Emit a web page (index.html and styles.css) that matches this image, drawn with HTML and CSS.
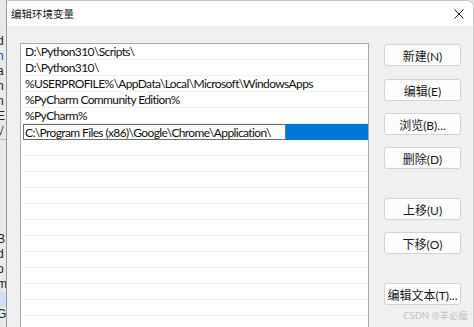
FILE: index.html
```html
<!DOCTYPE html>
<html lang="zh-CN">
<head>
<meta charset="utf-8">
<title>编辑环境变量</title>
<link rel="stylesheet" href="styles.css">
</head>
<body>
<div class="behind">
  <div class="frag top">ł</div>
  <div class="frag">d</div>
  <div class="frag blue">n</div>
  <div class="frag">a</div>
  <div class="frag">n</div>
  <div class="frag">n</div>
  <div class="frag">E</div>
  <div class="frag">√</div>
  <div class="gap"></div>
  <div class="frag">B</div>
  <div class="frag">d</div>
  <div class="frag">o</div>
  <div class="frag">m</div>
  <div class="frag blue sel">l</div>
  <div class="frag">G</div>
</div>
<div class="dialog">
  <div class="titlebar">
    <span class="title">编辑环境变量</span>
    <svg class="close" width="10" height="10" viewBox="0 0 10 10"><path d="M0.5 0.5 L9.5 9.5 M9.5 0.5 L0.5 9.5" stroke="#1a1a1a" stroke-width="1" fill="none"/></svg>
  </div>
  <div class="content">
    <div class="list">
      <div class="row">D:\Python310\Scripts\</div>
      <div class="row">D:\Python310\</div>
      <div class="row">%USERPROFILE%\AppData\Local\Microsoft\WindowsApps</div>
      <div class="row">%PyCharm Community Edition%</div>
      <div class="row">%PyCharm%</div>
      <div class="row selected"><span class="edit">C:\Program Files (x86)\Google\Chrome\Application\</span><span class="fill"></span></div>
      <div class="row"></div>
      <div class="row"></div>
      <div class="row"></div>
      <div class="row"></div>
      <div class="row"></div>
      <div class="row"></div>
      <div class="row"></div>
      <div class="row"></div>
      <div class="row"></div>
      <div class="row"></div>
      <div class="row"></div>
      <div class="row"></div>
      <div class="row"></div>
    </div>
    <div class="buttons">
      <div class="btn">新建(N)</div>
      <div class="btn">编辑(E)</div>
      <div class="btn">浏览(B)...</div>
      <div class="btn">删除(D)</div>
      <div class="btn sep">上移(U)</div>
      <div class="btn">下移(O)</div>
      <div class="btn sep">编辑文本(T)...</div>
      <div class="watermark">CSDN @羊必瘦</div>
    </div>
  </div>
</div>
</body>
</html>
```
FILE: styles.css
```css
html, body {
  margin: 0;
  padding: 0;
  height: 100%;
  overflow: hidden;
}
body {
  display: flex;
  width: 474px;
  height: 327px;
  font-family: "Lato", "Noto Sans CJK SC", sans-serif;
  font-size: 12px;
  color: #1a1a1a;
  background: #e6e6e6;
}
.behind {
  width: 6px;
  flex: none;
  overflow: hidden;
  background: #e9e9e9;
  display: flex;
  flex-direction: column;
  font-family: "Liberation Sans", sans-serif;
  font-size: 12px;
  line-height: 15px;
  color: #222;
}
.frag {
  margin-left: -3px;
  height: 15px;
}
.frag.top { margin-top: 4px; height: 30px; }
.frag.blue { color: #1a4f9c; }
.frag.sel { background: #cfe0f5; }
.gap { height: 92px; border-top: 1px solid #bdbdbd; }
.dialog {
  flex: 1;
  display: flex;
  flex-direction: column;
  background: #f0f0f0;
  border-left: 1px solid #9a9a9a;
  border-top: 1px solid #c8c8c8;
  border-right: 1px solid #c8c8c8;
  border-top-right-radius: 7px;
  overflow: hidden;
}
.titlebar {
  height: 25px;
  flex: none;
  background: #ffffff;
  display: flex;
  align-items: center;
  justify-content: space-between;
  padding: 0 9px 0 4px;
}
.title {
  font-family: "Noto Sans CJK SC", sans-serif;
  font-size: 10.5px;
  color: #1a1a1a;
  margin-top: -1px;
}
.close { display: block; margin-top: 1px; }
.content {
  flex: 1;
  display: flex;
  padding: 17px 0 0 13px;
  gap: 15px;
  min-height: 0;
}
.list {
  width: 347px;
  flex: none;
  background: #ffffff;
  border: 1px solid #a9a9a9;
  border-bottom: none;
  overflow: hidden;
}
.row {
  height: 15px;
  border-bottom: 1px solid #f3f3f3;
  padding-left: 4px;
  line-height: 16px;
  white-space: nowrap;
  font-family: "Lato", sans-serif;
  font-size: 12px;
  letter-spacing: -0.62px;
  color: #111111;
  display: flex;
}
.row.selected {
  padding-left: 2px;
  height: 16px;
  border-bottom: none;
}
.edit {
  width: 260px;
  flex: none;
  border: 1px solid #6d6d6d;
  background: #ffffff;
  padding-left: 1px;
  line-height: 15px;
  height: 14px;
  overflow: hidden;
}
.fill {
  flex: 1;
  background: #0078d7;
}
.buttons {
  width: 77px;
  flex: none;
  display: flex;
  flex-direction: column;
  padding-top: 1px;
}
.btn {
  box-sizing: border-box;
  height: 22px;
  border: 1px solid #d3d3d3;
  border-radius: 3px;
  background: #fdfdfd;
  display: flex;
  align-items: center;
  justify-content: center;
  font-family: "Lato", "Noto Sans CJK SC", sans-serif;
  font-size: 12px;
  color: #1a1a1a;
  margin-bottom: 12px;
  white-space: nowrap;
}
.btn:first-child { margin-bottom: 13px; }
.btn.sep { margin-top: 17px; }
.watermark {
  margin-top: -9px;
  margin-right: -7px;
  text-align: right;
  white-space: nowrap;
  font-family: "Lato", "Noto Sans CJK SC", sans-serif;
  font-size: 9.5px;
  color: #c4c4c4;
}
```
